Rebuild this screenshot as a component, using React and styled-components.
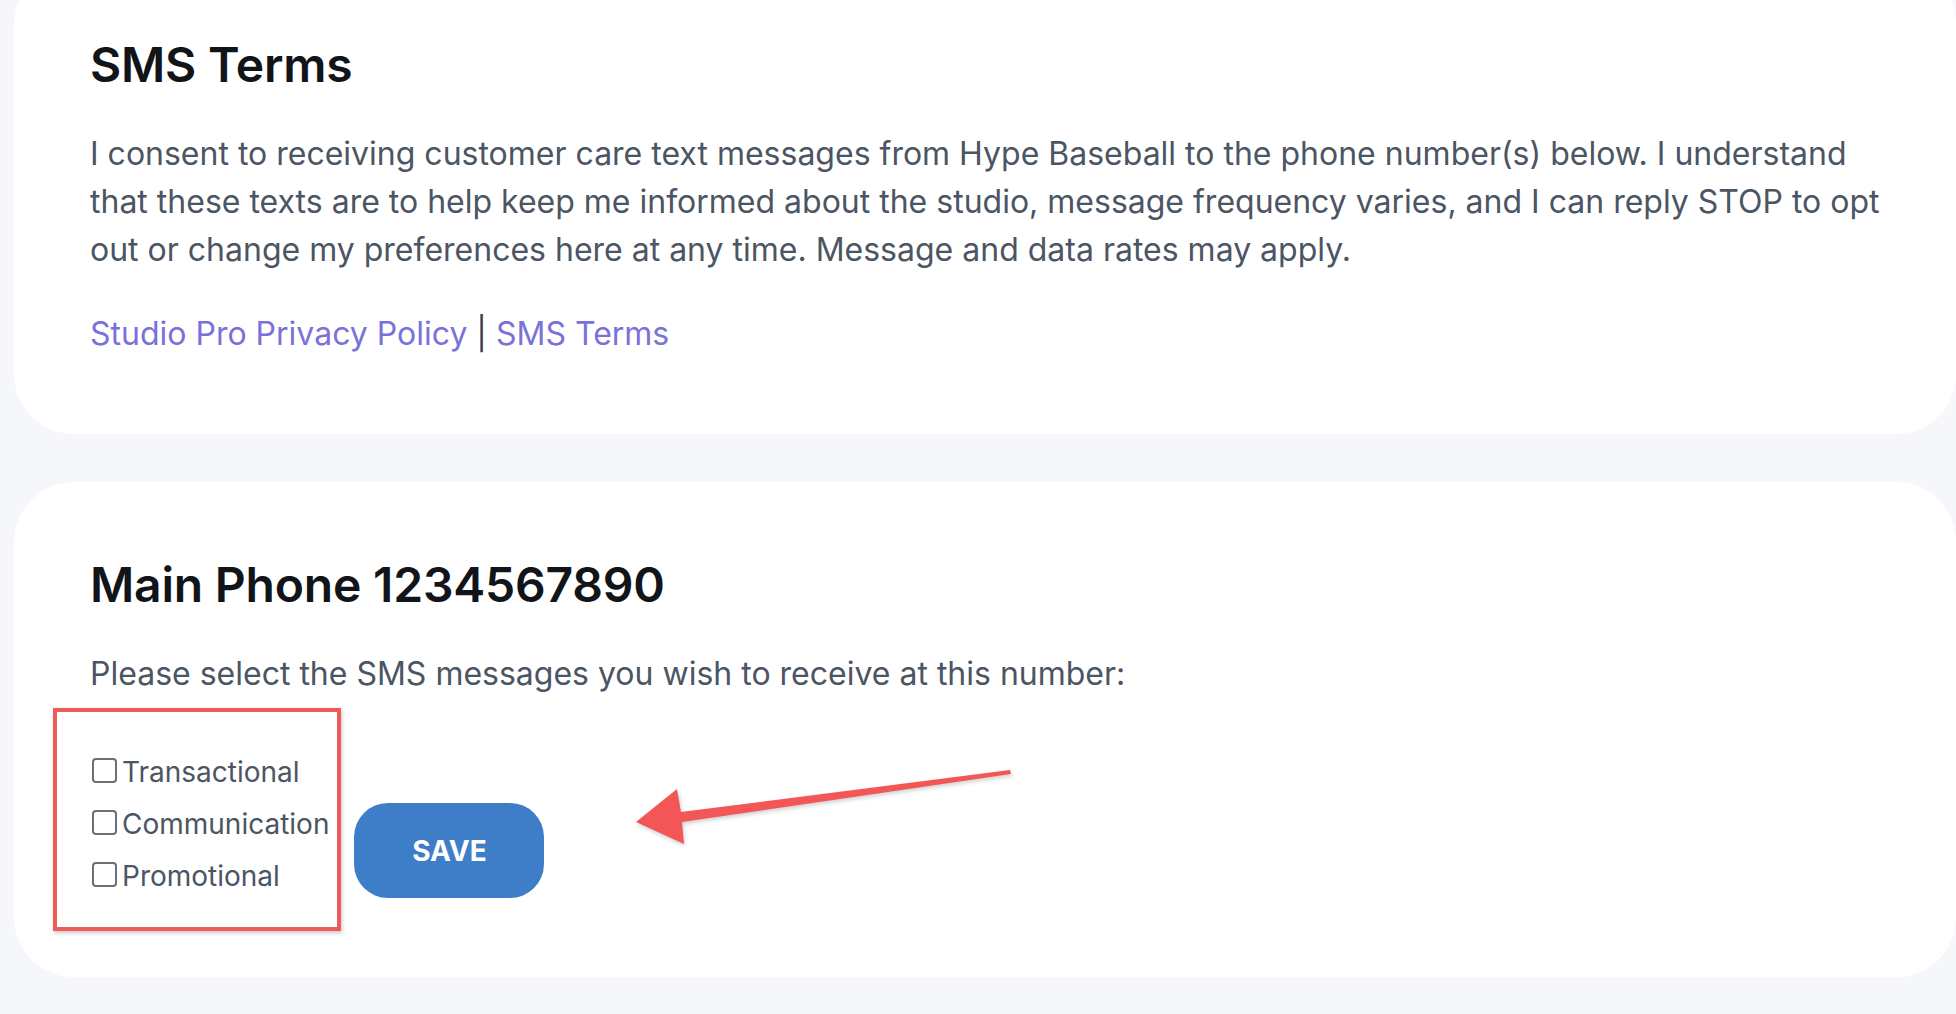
import React from 'react';
import styled, { createGlobalStyle } from 'styled-components';

const GlobalStyle = createGlobalStyle`
  html, body {
    margin: 0;
    padding: 0;
    background: #f5f7fa;
    font-family: Inter, 'Liberation Sans', sans-serif;
    overflow: hidden;
  }
`;

const Page = styled.div`
  display: flex;
  flex-direction: column;
  gap: 48px;
  padding: 0 0 0 14px;
  height: 1014px;
  overflow: hidden;
`;

const Card = styled.section`
  position: relative;
  background: #fff;
  border-radius: 60px;
  padding: ${(props) => (props.$clipped ? '72px 40px 76px 76px' : '74px 40px 46px 76px')};
  margin-top: ${(props) => (props.$clipped ? '-36px' : '0')};
`;

const Title = styled.h2`
  margin: 0 0 36px;
  font-size: 48px;
  line-height: 58px;
  font-weight: 600;
  color: #111418;
  letter-spacing: -0.2px;
`;

const Text = styled.p`
  margin: 0 0 36px;
  max-width: 1810px;
  font-size: 32px;
  line-height: 48px;
  color: #4b5563;
  &:last-child {
    margin-bottom: 0;
  }
`;

const Links = styled.div`
  font-size: 32px;
  line-height: 48px;
  color: #374151;
`;

const Link = styled.a`
  color: #7a72d8;
  text-decoration: none;
  cursor: pointer;
`;

const Prompt = styled.p`
  margin: 0 0 10px;
  font-size: 32px;
  line-height: 48px;
  color: #4b5563;
`;

const OptionsRow = styled.div`
  display: flex;
  align-items: flex-start;
  gap: 13px;
  margin-left: -37px;
`;

/* red annotation frame drawn round the options */
const Frame = styled.div`
  border: 4px solid #ef5b5b;
  box-shadow: 1px 2px 4px rgba(0, 0, 0, 0.22);
  padding: 34px 8px 25px 35px;
`;

const OptionList = styled.div`
  display: flex;
  flex-direction: column;
`;

const Option = styled.label`
  display: flex;
  align-items: center;
  gap: 5px;
  height: 52px;
  font-size: 28px;
  color: #4b5563;
  cursor: pointer;
`;

const Box = styled.input`
  appearance: none;
  margin: 0;
  width: 25px;
  height: 25px;
  border: 2px solid #6b6f78;
  border-radius: 4px;
  background: #fff;
  flex-shrink: 0;
  position: relative;
  top: -2px;
`;

const SaveButton = styled.button`
  margin-top: 95px;
  width: 190px;
  height: 95px;
  border: none;
  border-radius: 34px;
  background: #3e7ec9;
  color: #fff;
  font-family: Inter, 'Liberation Sans', sans-serif;
  font-size: 28px;
  font-weight: 700;
  cursor: pointer;
`;

const Arrow = styled.svg`
  position: absolute;
  left: 606px;
  top: 279px;
  width: 400px;
  height: 95px;
  overflow: visible;
  filter: drop-shadow(1px 2px 2px rgba(0, 0, 0, 0.2));
`;

const options = ['Transactional', 'Communication', 'Promotional'];

const App = () => {
  return (
    <>
      <GlobalStyle />
      <Page>
        <Card $clipped>
          <Title>SMS Terms</Title>
          <Text>
            I consent to receiving customer care text messages from Hype Baseball to the phone
            number(s) below. I understand that these texts are to help keep me informed about the
            studio, message frequency varies, and I can reply STOP to opt out or change my
            preferences here at any time. Message and data rates may apply.
          </Text>
          <Links>
            <Link>Studio Pro Privacy Policy</Link> | <Link>SMS Terms</Link>
          </Links>
        </Card>

        <Card>
          <Title>Main Phone 1234567890</Title>
          <Prompt>Please select the SMS messages you wish to receive at this number:</Prompt>
          <OptionsRow>
            <Frame>
              <OptionList>
                {options.map((name) => (
                  <Option key={name}>
                    <Box type="checkbox" />
                    {name}
                  </Option>
                ))}
              </OptionList>
            </Frame>
            <SaveButton>SAVE</SaveButton>
          </OptionsRow>
          <Arrow viewBox="0 0 400 95">
            <polygon
              points="390,9 61,51 57,28 16,61 64,83 62,61 391,13"
              fill="#f25656"
            />
          </Arrow>
        </Card>
      </Page>
    </>
  );
};

export default App;
